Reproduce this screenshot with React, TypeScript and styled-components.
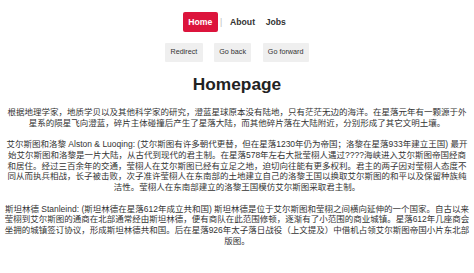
import React from "react";
import styled, { createGlobalStyle } from "styled-components";

const GlobalStyle = createGlobalStyle`
  html, body { margin: 0; padding: 0; background: #ffffff; }
  body {
    font-family: "Liberation Sans", "Noto Sans CJK SC", Arial, sans-serif;
    color: #333333;
  }
`;

const Page = styled.div`
  padding: 12.3px 4.33px 0;
  text-align: center;
`;

const Nav = styled.nav`
  display: flex;
  justify-content: center;
  align-items: center;
  font-size: 8.66px;
  font-weight: bold;
`;

const NavLink = styled.a<{ $active?: boolean }>`
  display: inline-block;
  padding: 4.7px 5.3px;
  line-height: 10px;
  border-radius: 2px;
  text-decoration: none;
  color: ${(p) => (p.$active ? "#ffffff" : "#333333")};
  background: ${(p) => (p.$active ? "#dc143c" : "transparent")};
  cursor: pointer;
`;

const Separator = styled.span`
  color: #bbbbbb;
  font-weight: normal;
  padding: 0 2.5px;
  line-height: 10px;
`;

const ButtonRow = styled.div`
  display: flex;
  justify-content: center;
  gap: 11.5px;
  margin-top: 11.5px;
`;

const ActionButton = styled.button`
  font-family: "Liberation Sans", Arial, sans-serif;
  font-size: 7.2px;
  line-height: 8.4px;
  padding: 5.3px 5.2px;
  border: none;
  border-radius: 1px;
  background: #efefef;
  color: #333333;
  cursor: pointer;
`;

const Title = styled.h1`
  font-size: 17.3px;
  font-weight: bold;
  color: #222222;
  margin: 12px 0 13px;
  line-height: 20px;
`;

const Paragraph = styled.p`
  font-size: 8.5px;
  line-height: 10.7px;
  margin: 0 0 10.8px;
  color: #333333;
`;

export default function App() {
  return (
    <>
      <GlobalStyle />
      <Page>
        <Nav>
          <NavLink $active>Home</NavLink>
          <Separator>|</Separator>
          <NavLink>About</NavLink>
          <NavLink>Jobs</NavLink>
        </Nav>
        <ButtonRow>
          <ActionButton>Redirect</ActionButton>
          <ActionButton>Go back</ActionButton>
          <ActionButton>Go forward</ActionButton>
        </ButtonRow>
        <Title>Homepage</Title>
        <Paragraph>
          根据地理学家，地质学贝以及其他科学家的研究，澄蓝星球原本没有陆地，只有茫茫无边的海洋。在星落元年有一颗源于外星系的陨星飞向澄蓝，碎片主体碰撞后产生了星落大陆，而其他碎片落在大陆附近，分别形成了其它文明土壤。
        </Paragraph>
        <Paragraph>
          艾尔斯图和洛黎 Alston &amp; Luoqing: (艾尔斯图有许多朝代更替，但在星落1230年仍为帝国；洛黎在星落933年建立王国) 最开始艾尔斯图和洛黎是一片大陆，从古代到现代的君主制。在星落578年左右大批莹栩人遇过????海峡进入艾尔斯图帝国经商和居住。经过三百余年的交通，莹栩人在艾尔斯图已经有立足之地，迫切向往能有更多权利。君主的两子因对莹栩人态度不同从而执兵相战，长子被击败，次子准许莹栩人在东南部的土地建立自己的洛黎王国以换取艾尔斯图的和平以及保留种族纯洁性。莹栩人在东南部建立的洛黎王国模仿艾尔斯图采取君主制。
        </Paragraph>
        <Paragraph>
          斯坦林德 Stanleind: (斯坦林德在星落612年成立共和国) 斯坦林德是位于艾尔斯图和莹栩之间横向延伸的一个国家。自古以来莹栩到艾尔斯图的通商在北部通常经由斯坦林德，便有商队在此范围修顿，逐渐有了小范围的商业城镇。星落612年几座商会坐拥的城镇签订协议，形成斯坦林德共和国。后在星落926年太子落日战役（上文提及）中借机占领艾尔斯图帝国小片东北部版图。
        </Paragraph>
      </Page>
    </>
  );
}
